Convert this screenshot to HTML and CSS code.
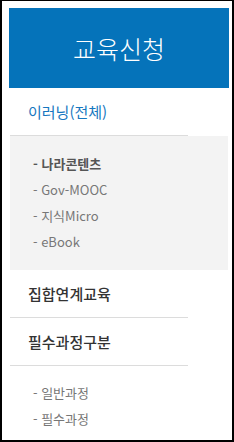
FILE: index.html
```html
<!DOCTYPE html>
<html lang="ko">
<head>
<meta charset="utf-8">
<title>교육신청</title>
<link rel="stylesheet" href="styles.css">
</head>
<body>
<div class="frame">
  <div class="header">교육신청</div>
  <ul class="menu">
    <li class="item">
      <div class="label active">이러닝(전체)</div>
      <ul class="sub shaded">
        <li class="current">- 나라콘텐츠</li>
        <li>- Gov-MOOC</li>
        <li>- 지식Micro</li>
        <li>- eBook</li>
      </ul>
    </li>
    <li class="item">
      <div class="label">집합연계교육</div>
    </li>
    <li class="item">
      <div class="label">필수과정구분</div>
      <ul class="sub plain">
        <li>- 일반과정</li>
        <li>- 필수과정</li>
      </ul>
    </li>
  </ul>
</div>
</body>
</html>
```
FILE: styles.css
```css
html, body {
  margin: 0;
  padding: 0;
  background: #fff;
}
body {
  font-family: "Noto Sans CJK KR", "Noto Sans", sans-serif;
}
.frame {
  box-sizing: border-box;
  width: 234px;
  height: 442px;
  border-style: solid;
  border-color: #000;
  border-width: 1px 2px 2px 2px;
  padding: 7px 0 0 7px;
  overflow: hidden;
}
.header {
  width: 220px;
  height: 80px;
  background: #0573ba;
  color: #fff;
  font-size: 25px;
  font-weight: 300;
  display: flex;
  align-items: center;
  justify-content: center;
}
.menu, .sub {
  list-style: none;
  margin: 0;
  padding: 0;
}
.menu {
  margin-left: 1px;
}
.label {
  box-sizing: border-box;
  width: 178px;
  height: 48px;
  border-bottom: 1px solid #dcdcdc;
  padding-left: 18px;
  display: flex;
  align-items: center;
  font-size: 15px;
  font-weight: 500;
  color: #333;
}
.label.active {
  color: #1677c0;
  font-weight: 400;
}
.sub li {
  height: 26px;
  display: flex;
  align-items: center;
  padding-left: 23px;
  font-size: 13px;
  color: #777;
}
.sub li.current {
  color: #555;
  font-weight: 700;
}
.shaded {
  width: 218px;
  background: #f3f3f3;
  padding: 14px 0 16px;
}
.plain {
  padding-top: 13px;
}
```
